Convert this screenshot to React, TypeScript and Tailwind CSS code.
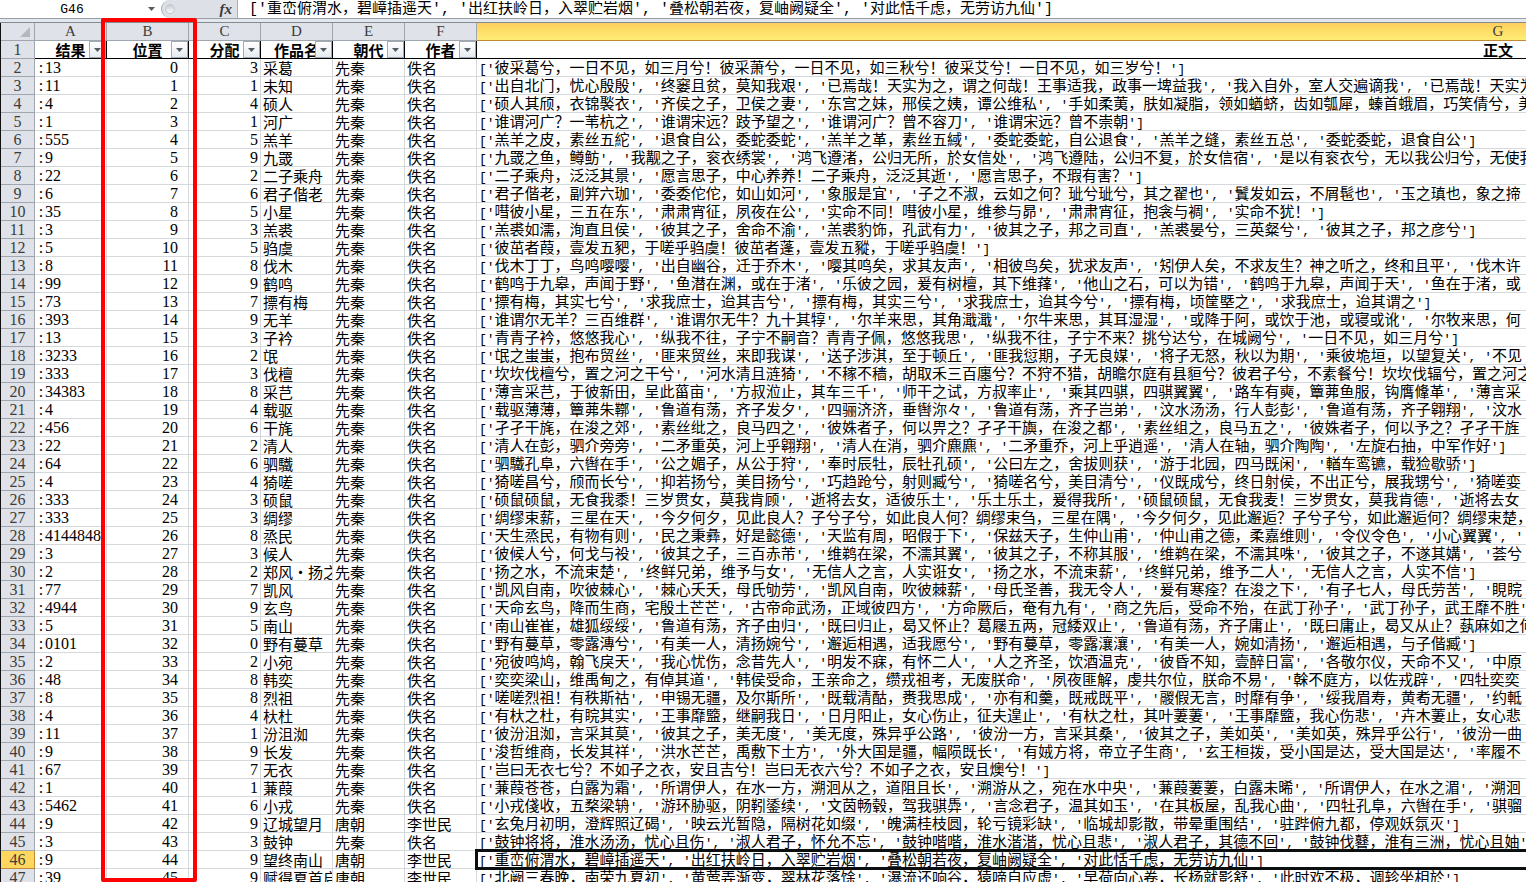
import { Fragment } from 'react';

type Row = {
    result: string;
    digit: number;
    title: string;
    dynasty: string;
    author: string;
    body: string;
};

const FORMULA = "['重峦俯渭水，碧嶂插遥天', '出红扶岭日，入翠贮岩烟', '叠松朝若夜，复岫阙疑全', '对此恬千虑，无劳访九仙']";

const QIN = '先秦';
const TANG = '唐朝';
const ANON = '佚名';
const LI = '李世民';

function row(result: string, digit: number, title: string, body: string, dynasty = QIN, author = ANON): Row {
    return { result, digit, title, dynasty, author, body };
}

const rows: Row[] = [
    row(':13', 3, '采葛', "['彼采葛兮，一日不见，如三月兮！彼采萧兮，一日不见，如三秋兮！彼采艾兮！一日不见，如三岁兮！']"),
    row(':11', 1, '未知', "['出自北门，忧心殷殷', '终窭且贫，莫知我艰', '已焉哉！天实为之，谓之何哉！王事适我，政事一埤益我', '我入自外，室人交遍谪我', '已焉哉！天实为"),
    row(':4', 4, '硕人', "['硕人其颀，衣锦褧衣', '齐侯之子，卫侯之妻', '东宫之妹，邢侯之姨，谭公维私', '手如柔荑，肤如凝脂，领如蝤蛴，齿如瓠犀，螓首蛾眉，巧笑倩兮，美"),
    row(':1', 1, '河广', "['谁谓河广？一苇杭之', '谁谓宋远？跂予望之', '谁谓河广？曾不容刀', '谁谓宋远？曾不崇朝']"),
    row(':555', 5, '羔羊', "['羔羊之皮，素丝五紽', '退食自公，委蛇委蛇', '羔羊之革，素丝五緎', '委蛇委蛇，自公退食', '羔羊之缝，素丝五总', '委蛇委蛇，退食自公']"),
    row(':9', 9, '九罭', "['九罭之鱼，鳟鲂', '我觏之子，衮衣绣裳', '鸿飞遵渚，公归无所，於女信处', '鸿飞遵陆，公归不复，於女信宿', '是以有衮衣兮，无以我公归兮，无使我"),
    row(':22', 2, '二子乘舟', "['二子乘舟，泛泛其景', '愿言思子，中心养养！二子乘舟，泛泛其逝', '愿言思子，不瑕有害？']"),
    row(':6', 6, '君子偕老', "['君子偕老，副笄六珈', '委委佗佗，如山如河', '象服是宜', '子之不淑，云如之何？玼兮玼兮，其之翟也', '鬒发如云，不屑髢也', '玉之瑱也，象之揥"),
    row(':35', 5, '小星', "['嘒彼小星，三五在东', '肃肃宵征，夙夜在公', '实命不同！嘒彼小星，维参与昴', '肃肃宵征，抱衾与裯', '实命不犹！']"),
    row(':3', 3, '羔裘', "['羔裘如濡，洵直且侯', '彼其之子，舍命不渝', '羔裘豹饰，孔武有力', '彼其之子，邦之司直', '羔裘晏兮，三英粲兮', '彼其之子，邦之彦兮']"),
    row(':5', 5, '驺虞', "['彼茁者葭，壹发五豝，于嗟乎驺虞！彼茁者蓬，壹发五豵，于嗟乎驺虞！']"),
    row(':8', 8, '伐木', "['伐木丁丁，鸟鸣嘤嘤', '出自幽谷，迁于乔木', '嘤其鸣矣，求其友声', '相彼鸟矣，犹求友声', '矧伊人矣，不求友生？神之听之，终和且平', '伐木许"),
    row(':99', 9, '鹤鸣', "['鹤鸣于九皋，声闻于野', '鱼潜在渊，或在于渚', '乐彼之园，爰有树檀，其下维萚', '他山之石，可以为错', '鹤鸣于九皋，声闻于天', '鱼在于渚，或"),
    row(':73', 7, '摽有梅', "['摽有梅，其实七兮', '求我庶士，迨其吉兮', '摽有梅，其实三兮', '求我庶士，迨其今兮', '摽有梅，顷筐塈之', '求我庶士，迨其谓之']"),
    row(':393', 9, '无羊', "['谁谓尔无羊？三百维群', '谁谓尔无牛？九十其犉', '尔羊来思，其角濈濈', '尔牛来思，其耳湿湿', '或降于阿，或饮于池，或寝或讹', '尔牧来思，何"),
    row(':13', 3, '子衿', "['青青子衿，悠悠我心', '纵我不往，子宁不嗣音？青青子佩，悠悠我思', '纵我不往，子宁不来？挑兮达兮，在城阙兮', '一日不见，如三月兮']"),
    row(':3233', 2, '氓', "['氓之蚩蚩，抱布贸丝', '匪来贸丝，来即我谋', '送子涉淇，至于顿丘', '匪我愆期，子无良媒', '将子无怒，秋以为期', '乘彼垝垣，以望复关', '不见"),
    row(':333', 3, '伐檀', "['坎坎伐檀兮，置之河之干兮', '河水清且涟猗', '不稼不穑，胡取禾三百廛兮？不狩不猎，胡瞻尔庭有县貆兮？彼君子兮，不素餐兮！坎坎伐辐兮，置之河之"),
    row(':34383', 8, '采芑', "['薄言采芑，于彼新田，呈此菑亩', '方叔涖止，其车三千', '师干之试，方叔率止', '乘其四骐，四骐翼翼', '路车有奭，簟茀鱼服，钩膺鞗革', '薄言采"),
    row(':4', 4, '载驱', "['载驱薄薄，簟茀朱鞹', '鲁道有荡，齐子发夕', '四骊济济，垂辔沵々', '鲁道有荡，齐子岂弟', '汶水汤汤，行人彭彭', '鲁道有荡，齐子翱翔', '汶水"),
    row(':456', 6, '干旄', "['孑孑干旄，在浚之郊', '素丝纰之，良马四之', '彼姝者子，何以畀之？孑孑干旟，在浚之都', '素丝组之，良马五之', '彼姝者子，何以予之？孑孑干旌"),
    row(':22', 2, '清人', "['清人在彭，驷介旁旁', '二矛重英，河上乎翱翔', '清人在消，驷介麃麃', '二矛重乔，河上乎逍遥', '清人在轴，驷介陶陶', '左旋右抽，中军作好']"),
    row(':64', 6, '驷驖', "['驷驖孔阜，六辔在手', '公之媚子，从公于狩', '奉时辰牡，辰牡孔硕', '公曰左之，舍拔则获', '游于北园，四马既闲', '輶车鸾镳，载猃歇骄']"),
    row(':4', 4, '猗嗟', "['猗嗟昌兮，颀而长兮', '抑若扬兮，美目扬兮', '巧趋跄兮，射则臧兮', '猗嗟名兮，美目清兮', '仪既成兮，终日射侯，不出正兮，展我甥兮', '猗嗟娈"),
    row(':333', 3, '硕鼠', "['硕鼠硕鼠，无食我黍！三岁贯女，莫我肯顾', '逝将去女，适彼乐土', '乐土乐土，爰得我所', '硕鼠硕鼠，无食我麦！三岁贯女，莫我肯德', '逝将去女"),
    row(':333', 3, '绸缪', "['绸缪束薪，三星在天', '今夕何夕，见此良人？子兮子兮，如此良人何？绸缪束刍，三星在隅', '今夕何夕，见此邂逅？子兮子兮，如此邂逅何？绸缪束楚，"),
    row(':4144848', 8, '烝民', "['天生烝民，有物有则', '民之秉彝，好是懿德', '天监有周，昭假于下', '保兹天子，生仲山甫', '仲山甫之德，柔嘉维则', '令仪令色', '小心翼翼', '"),
    row(':3', 3, '候人', "['彼候人兮，何戈与祋', '彼其之子，三百赤芾', '维鹈在梁，不濡其翼', '彼其之子，不称其服', '维鹈在梁，不濡其咮', '彼其之子，不遂其媾', '荟兮"),
    row(':2', 2, '郑风·扬之', "['扬之水，不流束楚', '终鲜兄弟，维予与女', '无信人之言，人实诳女', '扬之水，不流束薪', '终鲜兄弟，维予二人', '无信人之言，人实不信']"),
    row(':77', 7, '凯风', "['凯风自南，吹彼棘心', '棘心夭夭，母氏劬劳', '凯风自南，吹彼棘薪', '母氏圣善，我无令人', '爰有寒痊？在浚之下', '有子七人，母氏劳苦', '睍睆"),
    row(':4944', 9, '玄鸟', "['天命玄鸟，降而生商，宅殷土芒芒', '古帝命武汤，正域彼四方', '方命厥后，奄有九有', '商之先后，受命不殆，在武丁孙子', '武丁孙子，武王靡不胜'"),
    row(':5', 5, '南山', "['南山崔崔，雄狐绥绥', '鲁道有荡，齐子由归', '既曰归止，曷又怀止？葛屦五两，冠緌双止', '鲁道有荡，齐子庸止', '既曰庸止，曷又从止？蓺麻如之何"),
    row(':0101', 0, '野有蔓草', "['野有蔓草，零露漙兮', '有美一人，清扬婉兮', '邂逅相遇，适我愿兮', '野有蔓草，零露瀼瀼', '有美一人，婉如清扬', '邂逅相遇，与子偕臧']"),
    row(':2', 2, '小宛', "['宛彼鸣鸠，翰飞戾天', '我心忧伤，念昔先人', '明发不寐，有怀二人', '人之齐圣，饮酒温克', '彼昏不知，壹醉日富', '各敬尔仪，天命不又', '中原"),
    row(':48', 8, '韩奕', "['奕奕梁山，维禹甸之，有倬其道', '韩侯受命，王亲命之，缵戎祖考，无废朕命', '夙夜匪解，虔共尔位，朕命不易', '榦不庭方，以佐戎辟', '四牡奕奕"),
    row(':8', 8, '烈祖', "['嗟嗟烈祖！有秩斯祜', '申锡无疆，及尔斯所', '既载清酤，赉我思成', '亦有和羹，既戒既平', '鬷假无言，时靡有争', '绥我眉寿，黄耇无疆', '约軧"),
    row(':4', 4, '杕杜', "['有杕之杜，有睆其实', '王事靡盬，继嗣我日', '日月阳止，女心伤止，征夫遑止', '有杕之杜，其叶萋萋', '王事靡盬，我心伤悲', '卉木萋止，女心悲"),
    row(':11', 1, '汾沮洳', "['彼汾沮洳，言采其莫', '彼其之子，美无度', '美无度，殊异乎公路', '彼汾一方，言采其桑', '彼其之子，美如英', '美如英，殊异乎公行', '彼汾一曲"),
    row(':9', 9, '长发', "['浚哲维商，长发其祥', '洪水芒芒，禹敷下土方', '外大国是疆，幅陨既长', '有娀方将，帝立子生商', '玄王桓拨，受小国是达，受大国是达', '率履不"),
    row(':67', 7, '无衣', "['岂曰无衣七兮？不如子之衣，安且吉兮！岂曰无衣六兮？不如子之衣，安且燠兮！']"),
    row(':1', 1, '蒹葭', "['蒹葭苍苍，白露为霜', '所谓伊人，在水一方，溯洄从之，道阻且长', '溯游从之，宛在水中央', '蒹葭萋萋，白露未晞', '所谓伊人，在水之湄', '溯洄"),
    row(':5462', 6, '小戎', "['小戎俴收，五楘梁辀', '游环胁驱，阴靷鋈续', '文茵畅毂，驾我骐馵', '言念君子，温其如玉', '在其板屋，乱我心曲', '四牡孔阜，六辔在手', '骐骝"),
    row(':9', 9, '辽城望月', "['玄兔月初明，澄辉照辽碣', '映云光暂隐，隔树花如缀', '魄满桂枝圆，轮亏镜彩缺', '临城却影散，带晕重围结', '驻跸俯九都，停观妖氛灭']", TANG, LI),
    row(':3', 3, '鼓钟', "['鼓钟将将，淮水汤汤，忧心且伤', '淑人君子，怀允不忘', '鼓钟喈喈，淮水湝湝，忧心且悲', '淑人君子，其德不回', '鼓钟伐鼛，淮有三洲，忧心且妯'"),
    row(':9', 9, '望终南山', FORMULA, TANG, LI),
    row(':39', 9, '赋得夏首启', "['北阙三春晚，南荣九夏初', '黄莺弄渐变，翠林花落馀', '瀑流还响谷，猿啼自应虚', '早荷向心卷，长杨就影舒', '此时欢不极，调轸坐相於']", TANG, LI),
];

const columns = [
    { letter: 'A', label: '结果', width: 'w-[72px]' },
    { letter: 'B', label: '位置', width: 'w-[82px]' },
    { letter: 'C', label: '分配', width: 'w-[72px]' },
    { letter: 'D', label: '作品名', width: 'w-[72px]' },
    { letter: 'E', label: '朝代', width: 'w-[72px]' },
    { letter: 'F', label: '作者', width: 'w-[72px]' },
    { letter: 'G', label: '正文', width: 'w-[2043px]' },
];

const ACTIVE_ROW = 46;
const cell = 'h-[18px] overflow-hidden border-r border-b border-[#d6d9dc] p-0 whitespace-pre';
const num = "font-['Liberation_Serif',serif] text-[16px]";

// quotes, commas and brackets take half the width of a hanzi
function Verse({ text }: { text: string }) {
    return (
        <div className="h-[17px] leading-[15px]">
            {text.split(/([\x20-\x7e]+)/).map((part, i) =>
                i % 2 ? (
                    <span key={i} className="font-['Liberation_Mono',monospace] text-[13px] leading-none">{part}</span>
                ) : (
                    <Fragment key={i}>{part}</Fragment>
                ),
            )}
        </div>
    );
}

function DownArrow() {
    return (
        <svg width="7" height="4" viewBox="0 0 7 4" aria-hidden="true">
            <path d="M0 0h7L3.5 4z" fill="#565b61" />
        </svg>
    );
}

function FormulaBar() {
    return (
        <div className="flex h-[19px] shrink-0 border-b border-[#9a9fa5] bg-white pl-[2px]">
            <input
                aria-label="Name box"
                defaultValue="G46"
                className="w-[140px] bg-white text-center font-['Liberation_Mono',monospace] text-[13px] outline-none"
            />
            <button aria-label="Open name list" className="flex w-[19px] items-center justify-center">
                <DownArrow />
            </button>
            <div className="flex w-[77px] items-center justify-between rounded-l-full border-r border-l border-[#a9b0b8] bg-[#dde1e7] pr-[5px] pl-[3px]">
                <span className="size-[10px] rounded-full border border-[#c3c8cf] bg-linear-to-b from-[#c9cdd3] to-[#fafafa]" />
                <button aria-label="Insert function" className="font-['Liberation_Serif',serif] text-[15px] leading-[18px] font-bold text-[#3a3a3a] italic">
                    fx
                </button>
            </div>
            <input
                aria-label="Formula"
                defaultValue={FORMULA}
                className="min-w-0 flex-1 bg-white pl-[11px] font-['Liberation_Mono','Noto_Sans_CJK_SC',monospace] text-[15px] outline-none"
            />
        </div>
    );
}

export default function App() {
    return (
        <div lang="zh-CN" className="relative flex h-screen flex-col overflow-hidden bg-white font-['Noto_Sans_CJK_SC',sans-serif] text-[15px] leading-[17px] text-black">
            <FormulaBar />
            <div className="h-[4px] shrink-0 border-b border-[#858a90] bg-[#e3e8f0]" />

            <div className="min-h-0 flex-1 overflow-hidden border-l border-[#111]">
                <table className="w-[2519px] table-fixed border-separate border-spacing-0">
                    <colgroup>
                        <col className="w-[34px]" />
                        {columns.map((c) => (
                            <col key={c.letter} className={c.width} />
                        ))}
                    </colgroup>
                    <thead>
                        <tr className={`${num} text-[#3c3c3c]`}>
                            <th className="h-[18px] border-r border-b border-[#9fa6ae] bg-[#dfe2e8] p-0">
                                <button aria-label="Select all" className="flex w-full justify-end pr-[4px]">
                                    <svg width="10" height="10" viewBox="0 0 10 10" aria-hidden="true">
                                        <path d="M10 0v10H0z" fill="#b3b8bf" />
                                    </svg>
                                </button>
                            </th>
                            {columns.map((c) => (
                                <th
                                    key={c.letter}
                                    scope="col"
                                    className={`h-[18px] border-r border-b p-0 text-[15px] font-normal ${
                                        c.letter === 'G'
                                            ? 'border-[#c08a35] bg-linear-to-b from-[#fdd05c] to-[#ffed76]'
                                            : 'border-[#9fa6ae] bg-[#dfe2e8]'
                                    }`}
                                >
                                    {c.letter}
                                </th>
                            ))}
                        </tr>
                        <tr>
                            <th scope="row" className={`h-[18px] border-r border-b border-[#9fa6ae] bg-[#dfe2e8] p-0 font-normal text-[#3c3c3c] ${num}`}>1</th>
                            {columns.map((c) => (
                                <th key={c.letter} className="relative h-[18px] border-r border-b border-black p-0 text-center font-bold whitespace-nowrap">
                                    {c.label}
                                    {c.letter !== 'G' && (
                                        <button
                                            aria-label={`Filter ${c.label}`}
                                            className="absolute top-0 right-0 flex size-[17px] items-center justify-center border border-[#a3abb6] bg-linear-to-b from-white to-[#e6eaf0]"
                                        >
                                            <DownArrow />
                                        </button>
                                    )}
                                </th>
                            ))}
                        </tr>
                    </thead>
                    <tbody>
                        {rows.map((r, i) => {
                            const n = i + 2;
                            const active = n === ACTIVE_ROW;
                            return (
                                <tr key={n}>
                                    <th
                                        scope="row"
                                        className={`h-[18px] border-r border-b p-0 font-normal text-[#3c3c3c] ${num} ${
                                            active ? 'border-[#c08a35] bg-[#ffd75f]' : 'border-[#9fa6ae] bg-[#dfe2e8]'
                                        }`}
                                    >
                                        {n}
                                    </th>
                                    <td className={`${cell} ${num} pl-[2px]`}>
                                        <span className="inline-block w-[8px] text-center leading-none">:</span>
                                        {r.result.slice(1)}
                                    </td>
                                    <td className={`${cell} ${num} pr-[10px] text-right`}>{i}</td>
                                    <td className={`${cell} ${num} pr-[2px] text-right`}>{r.digit}</td>
                                    <td className={`${cell} pl-[2px]`}>{r.title}</td>
                                    <td className={`${cell} pl-[2px]`}>{r.dynasty}</td>
                                    <td className={`${cell} pl-[2px]`}>{r.author}</td>
                                    <td className="relative h-[18px] border-b border-[#d6d9dc] p-0 pl-[2px] whitespace-pre">
                                        <Verse text={r.body} />
                                        {active && (
                                            <span className="pointer-events-none absolute -top-[2px] right-0 -bottom-[2px] -left-[2px] border-[3px] border-[#0c0f10]" />
                                        )}
                                    </td>
                                </tr>
                            );
                        })}
                    </tbody>
                </table>
            </div>

            {/* highlight around column B */}
            <div className="pointer-events-none absolute top-[18px] bottom-0 left-[101px] w-[96px] rounded-[2px] border-4 border-[#fe0000]" />
        </div>
    );
}
